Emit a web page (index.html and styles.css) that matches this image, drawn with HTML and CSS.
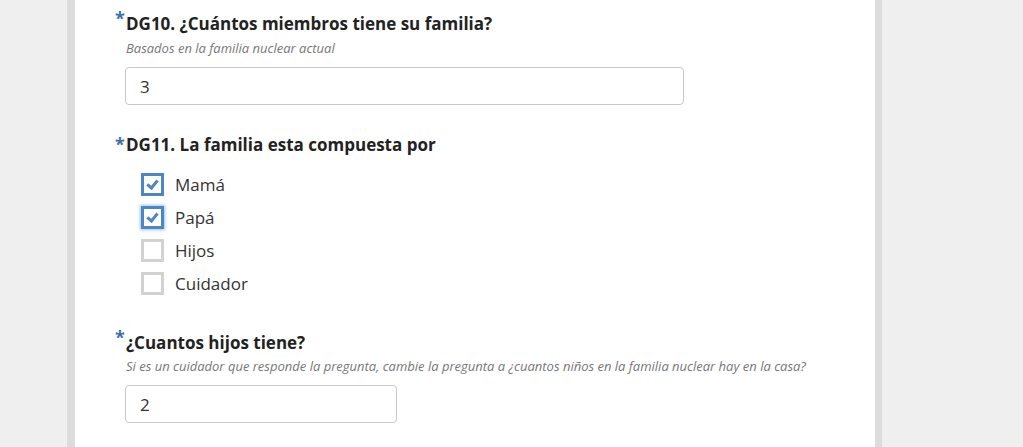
FILE: index.html
```html
<!DOCTYPE html>
<html lang="es">

<head>
    <meta charset="UTF-8">
    <meta name="viewport" content="width=device-width, initial-scale=1.0">
    <title>Encuesta - Datos generales</title>
    <link rel="stylesheet" href="styles.css">
</head>

<body>
    <div id="survey-container">

        <div class="question">
            <div class="question-title"><span class="required raised">*</span>DG10. ¿Cuántos miembros tiene su familia?</div>
            <div class="question-help">Basados en la familia nuclear actual</div>
            <input type="text" class="answer-input wide" value="3">
        </div>

        <div class="question">
            <div class="question-title"><span class="required">*</span>DG11. La familia esta compuesta por</div>
            <ul class="option-list">
                <li class="option"><span class="check-box checked"></span>Mamá</li>
                <li class="option"><span class="check-box checked focused"></span>Papá</li>
                <li class="option"><span class="check-box"></span>Hijos</li>
                <li class="option"><span class="check-box"></span>Cuidador</li>
            </ul>
        </div>

        <div class="question last">
            <div class="question-title"><span class="required raised">*</span>¿Cuantos hijos tiene?</div>
            <div class="question-help">Si es un cuidador que responde la pregunta, cambie la pregunta a ¿cuantos niños en la familia nuclear hay en la casa?</div>
            <input type="text" class="answer-input short" value="2">
        </div>

    </div>
</body>

</html>
```

FILE: styles.css
```css
body {
    font-family: 'Open Sans', 'Liberation Sans', sans-serif;
    background-color: #efefef;
    margin: 0;
    padding: 0;
    color: #222;
}

#survey-container {
    width: 760px;
    min-height: 100vh;
    margin-left: 67px;
    background-color: #fff;
    border-left: 8px solid #dcdcdc;
    border-right: 7px solid #dcdcdc;
    padding: 8px 0 0 40px;
}

.question {
    margin-bottom: 23px;
}

.question.last {
    padding-top: 4px;
}

.question-title {
    padding-top: 4px;
    font-size: 17px;
    font-weight: bold;
    line-height: 24px;
    color: #222;
}

.required {
    display: inline-block;
    width: 11px;
    color: #3b6fa8;
    font-size: 18px;
    font-weight: bold;
}

.required.raised {
    vertical-align: 5px;
    line-height: 10px;
}

.question-help {
    margin: 3px 0 0 11px;
    font-size: 13px;
    font-style: italic;
    color: #777;
    line-height: 18px;
}

.question.last .question-help {
    margin-top: 2px;
}

.answer-input {
    display: block;
    margin: 10px 0 0 10px;
    height: 38px;
    box-sizing: border-box;
    border: 1px solid #c8c8c8;
    border-radius: 4px;
    padding: 0 14px;
    font-family: 'Open Sans', 'Liberation Sans', sans-serif;
    font-size: 17px;
    color: #333;
    background: #fff;
}

.answer-input.wide {
    width: 559px;
}

.answer-input.short {
    width: 272px;
}

.option-list {
    list-style: none;
    margin: 11px 0 0 26px;
    padding: 0;
}

.option {
    display: flex;
    align-items: center;
    height: 33px;
    font-size: 17px;
    color: #333;
}

.check-box {
    width: 23px;
    height: 23px;
    box-sizing: border-box;
    border: 3px solid #d2d2d2;
    margin-right: 11px;
    position: relative;
    background: #fff;
}

.check-box.checked {
    border-color: #4f86c1;
}

.check-box.checked::after {
    content: '';
    position: absolute;
    left: 5px;
    top: 2px;
    width: 4px;
    height: 8px;
    border: solid #4f86c1;
    border-width: 0 3px 3px 0;
    transform: rotate(40deg);
}

.check-box.focused {
    box-shadow: 0 0 3px 1px #9ec3ea;
}
```
